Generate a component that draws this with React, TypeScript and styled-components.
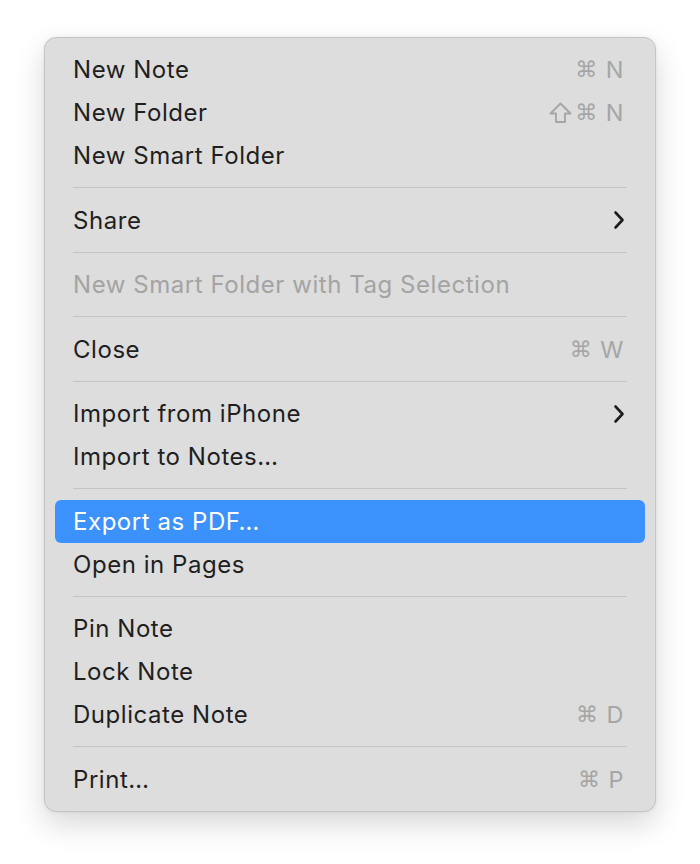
import styled, { createGlobalStyle } from 'styled-components'

const GlobalStyle = createGlobalStyle`
  html, body {
    margin: 0;
    background: #ffffff;
  }
  body {
    font-family: Inter, "Noto Sans", "DejaVu Sans", sans-serif;
    -webkit-font-smoothing: antialiased;
  }
`

const Page = styled.div`
  width: 700px;
  height: 864px;
  padding: 37px 0 0 44px;
  box-sizing: border-box;
`

const Menu = styled.div`
  width: 612px;
  box-sizing: border-box;
  padding: 10px 10px;
  background: #dcdddc;
  border: 1px solid #c4c4c4;
  border-radius: 12px;
  box-shadow: 0 12px 30px rgba(0, 0, 0, 0.16), 0 0 4px rgba(0, 0, 0, 0.06);
  display: flex;
  flex-direction: column;
`

const Row = styled.div<{ $disabled?: boolean; $active?: boolean }>`
  height: 43px;
  display: flex;
  align-items: center;
  justify-content: space-between;
  padding: 0 21px 0 18px;
  border-radius: 6px;
  font-size: 24px;
  letter-spacing: 0.55px;
  color: ${(p) => (p.$active ? '#ffffff' : p.$disabled ? '#a3a4a3' : '#1f1f1f')};
  background: ${(p) => (p.$active ? '#3c92fd' : 'transparent')};
`

const Separator = styled.div`
  height: 21.5px;
  display: flex;
  align-items: center;
  padding: 0 18px;

  &::after {
    content: '';
    flex: 1;
    height: 1px;
    background: #c3c4c3;
  }
`

const Shortcut = styled.span`
  display: flex;
  align-items: center;
  gap: 8px;
  color: #a5a6a5;
  font-size: 23.5px;
`

const Cmd = styled.span`
  font-family: "DejaVu Sans", sans-serif;
  font-size: 22px;
  margin-left: 2px;
`

function ShiftIcon() {
  return (
    <svg width="23" height="22" viewBox="0 0 23 22" fill="none" style={{ marginRight: -7 }}>
      <path
        d="M11.5 1.5 L21.5 11.5 H16 V20 H7 V11.5 H1.5 Z"
        stroke="#a5a6a5"
        strokeWidth="1.9"
        strokeLinejoin="round"
      />
    </svg>
  )
}

function Chevron() {
  return (
    <svg width="12" height="20" viewBox="0 0 12 20" fill="none" style={{ marginRight: -1 }}>
      <path d="M2.5 2.5 L9.5 10 L2.5 17.5" stroke="#1d1d1d" strokeWidth="2.6" strokeLinecap="round" strokeLinejoin="round" />
    </svg>
  )
}

type Item =
  | { sep: true }
  | { label: string; keys?: string; shift?: boolean; sub?: boolean; disabled?: boolean; active?: boolean }

const items: Item[] = [
  { label: 'New Note', keys: 'N' },
  { label: 'New Folder', keys: 'N', shift: true },
  { label: 'New Smart Folder' },
  { sep: true },
  { label: 'Share', sub: true },
  { sep: true },
  { label: 'New Smart Folder with Tag Selection', disabled: true },
  { sep: true },
  { label: 'Close', keys: 'W' },
  { sep: true },
  { label: 'Import from iPhone', sub: true },
  { label: 'Import to Notes…' },
  { sep: true },
  { label: 'Export as PDF…', active: true },
  { label: 'Open in Pages' },
  { sep: true },
  { label: 'Pin Note' },
  { label: 'Lock Note' },
  { label: 'Duplicate Note', keys: 'D' },
  { sep: true },
  { label: 'Print…', keys: 'P' },
]

export default function App() {
  return (
    <Page>
      <GlobalStyle />
      <Menu>
        {items.map((item, i) =>
          'sep' in item ? (
            <Separator key={i} />
          ) : (
            <Row key={i} $disabled={item.disabled} $active={item.active}>
              <span>{item.label}</span>
              {item.keys ? (
                <Shortcut>
                  {item.shift ? <ShiftIcon /> : null}
                  <Cmd>⌘</Cmd>
                  <span>{item.keys}</span>
                </Shortcut>
              ) : null}
              {item.sub ? <Chevron /> : null}
            </Row>
          )
        )}
      </Menu>
    </Page>
  )
}
